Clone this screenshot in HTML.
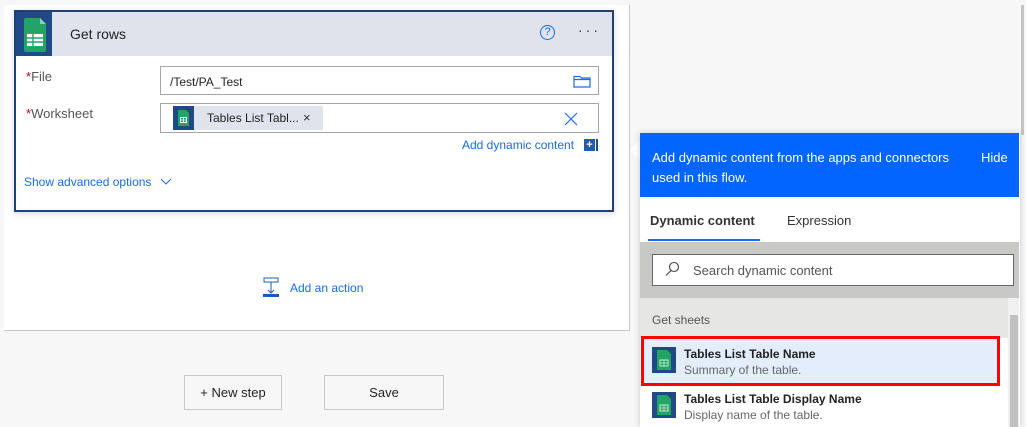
<!DOCTYPE html>
<html><head><style>
*{box-sizing:border-box;margin:0;padding:0}
body{width:1026px;height:427px;overflow:hidden;background:#f7f7f7;font-family:"Liberation Sans",sans-serif;position:relative;font-size:13px;color:#222}
.abs{position:absolute}
</style></head><body>
<div class="abs" style="left:4px;top:5px;width:626px;height:326px;background:#fff;border-right:1px solid #c8c8c8;border-bottom:1px solid #c8c8c8"></div>
<div class="abs" style="left:1021px;top:5px;width:3px;height:130px;background:#c4c4c4"></div>
<div class="abs" style="left:14px;top:10px;width:600px;height:202px;border:2px solid #223f7a;background:#fff;box-shadow:0 2px 6px rgba(0,0,0,.15)">
  <div class="abs" style="left:0;top:0;width:596px;height:44px;background:#dfe4ec"></div>
  <div class="abs" style="left:0;top:0;width:36px;height:44px;background:#1f4a87"></div>
  <svg class="abs" style="left:6px;top:4px" width="26" height="38" viewBox="0 0 26 38"><path d="M2 2h16l6 6v26a2 2 0 0 1-2 2H4a2 2 0 0 1-2-2V4a2 2 0 0 1 2-2z" fill="#21a464"/><path d="M18 2l6 6h-6z" fill="#8ed1b1"/><rect x="5" y="18" width="16" height="12" fill="#fff"/><path d="M5 22h16M5 26h16M11 18v12" stroke="#21a464" stroke-width="1.4"/></svg>
  <div class="abs" style="left:54px;top:14px;font-size:14px;color:#222">Get rows</div>
  <div class="abs" style="left:524px;top:13px;width:15px;height:15px;border:1.3px solid #1a6bf0;border-radius:50%;color:#1a6bf0;font-size:11px;text-align:center;line-height:13px">?</div>
  <div class="abs" style="left:562px;top:10px;font-size:14px;letter-spacing:3px;color:#333">···</div>
  <div class="abs" style="left:10px;top:57px;color:#555"><span style="color:#c00">*</span>File</div>
  <div class="abs" style="left:10px;top:94px;color:#555"><span style="color:#c00">*</span>Worksheet</div>
  <div class="abs" style="left:144px;top:54px;width:439px;height:29px;border:1px solid #a6a6a6;padding:8px 9px;font-size:12px">/Test/PA_Test</div>
  <svg class="abs" style="left:557px;top:62px" width="18" height="14" viewBox="0 0 18 14"><path d="M1 2.5h6l1.5 1.5H17V13H1z M1 5.5h16" fill="none" stroke="#1a6bf0" stroke-width="1.2"/></svg>
  <div class="abs" style="left:144px;top:91px;width:439px;height:30px;border:1px solid #a6a6a6"></div>
  <div class="abs" style="left:157px;top:94px;width:150px;height:24px;background:#dfe4ec"></div>
  <div class="abs" style="left:157px;top:94px;width:21px;height:24px;background:#1f4a87"></div>
  <svg class="abs" style="left:161px;top:97px" width="13" height="18" viewBox="0 0 13 18"><path d="M1 1h8l3 3v13H1z" fill="#21a464"/><rect x="3.5" y="8.5" width="6" height="5" fill="none" stroke="#fff" stroke-width="1"/><path d="M3.5 11h6M6.5 8.5v5" stroke="#fff" stroke-width=".8"/></svg>
  <div class="abs" style="left:191px;top:99px;font-size:12px">Tables List Tabl...</div>
  <div class="abs" style="left:287px;top:98px;font-size:13px;color:#333">×</div>
  <svg class="abs" style="left:548px;top:100px" width="14" height="14"><path d="M1 1l12 12M13 1L1 13" stroke="#1a6bf0" stroke-width="1.2"/></svg>
  <div class="abs" style="left:446px;top:126px;font-size:12px;color:#1a6bf0">Add dynamic content</div>
  <div class="abs" style="left:568px;top:127px;width:11px;height:12px;background:#1f5cb0;color:#fff;font-size:11px;line-height:12px;text-align:center;font-weight:bold">+</div>
  <div class="abs" style="left:580px;top:127px;width:2px;height:12px;background:#1f4a87"></div>
  <div class="abs" style="left:8px;top:163px;font-size:12px;color:#1a6bf0">Show advanced options</div>
  <svg class="abs" style="left:144px;top:166px" width="12" height="8"><path d="M1 1l5 5 5-5" fill="none" stroke="#1a6bf0"/></svg>
</div>
<svg class="abs" style="left:263px;top:277px" width="20" height="21"><rect x="1" y="1" width="14" height="4" fill="none" stroke="#1f5cb0"/><path d="M8 5v11M5 13l3 3 3-3" fill="none" stroke="#1f5cb0"/><rect x="0" y="17" width="16" height="3" fill="#1f5cb0"/></svg>
<div class="abs" style="left:290px;top:281px;font-size:12px;color:#1a6bf0">Add an action</div>
<div class="abs" style="left:184px;top:375px;width:98px;height:35px;border:1px solid #c8c8c8;background:#f7f7f7;text-align:center;line-height:33px;font-size:13px">+ New step</div>
<div class="abs" style="left:324px;top:375px;width:120px;height:35px;border:1px solid #c8c8c8;background:#f7f7f7;text-align:center;line-height:33px;font-size:13px">Save</div>
<div class="abs" style="left:630px;top:140px;width:0;height:0;border-top:10px solid transparent;border-bottom:10px solid transparent;border-right:10px solid #fff"></div>
<div class="abs" style="left:640px;top:133px;width:380px;height:294px;background:#fff;box-shadow:0 0 6px rgba(0,0,0,.2)">
  <div class="abs" style="left:0;top:0;width:379px;height:64px;background:#0066ff;color:#fff;font-size:13px">
    <div class="abs" style="left:12px;top:15px;line-height:20px;width:320px">Add dynamic content from the apps and connectors used in this flow.</div>
    <div class="abs" style="left:341px;top:17px">Hide</div>
  </div>
  <div class="abs" style="left:10px;top:80px;font-size:13px;font-weight:bold;color:#333">Dynamic content</div>
  <div class="abs" style="left:147px;top:80px;font-size:13px;color:#333">Expression</div>
  <div class="abs" style="left:8px;top:106px;width:112px;height:2px;background:#1a6bf0"></div>
  <div class="abs" style="left:0;top:109px;width:379px;height:56px;background:#c8c9c6"></div>
  <div class="abs" style="left:12px;top:121px;width:362px;height:32px;background:#fff;border:1px solid #666"></div>
  <svg class="abs" style="left:24px;top:128px" width="16" height="16"><circle cx="10" cy="6" r="4.5" fill="none" stroke="#444" stroke-width="1.1"/><path d="M7 9.5L2 14.5" stroke="#444" stroke-width="1.1"/></svg>
  <div class="abs" style="left:53px;top:130px;font-size:13px;color:#555">Search dynamic content</div>
  <div class="abs" style="left:0;top:165px;width:368px;height:40px;background:#e6e7e4"></div>
  <div class="abs" style="left:12px;top:180px;font-size:12px;color:#555">Get sheets</div>
  <div class="abs" style="left:368px;top:165px;width:11px;height:129px;background:#f0f0f0"></div>
  <div class="abs" style="left:370px;top:182px;width:8px;height:112px;background:#c1c1c1"></div>
  <div class="abs" style="left:1px;top:203px;width:359px;height:50px;background:#e3edfb;border:3px solid #f00"></div>
  <div class="abs" style="left:12px;top:214px;width:24px;height:26px;background:#1f4a87"></div>
  <svg class="abs" style="left:16px;top:216px" width="16" height="22" viewBox="0 0 16 22"><path d="M1 1h10l4 4v16H1z" fill="#21a464"/><rect x="4" y="11" width="8" height="6" fill="none" stroke="#c9ecd9" stroke-width="1"/><path d="M4 14h8M8 11v6" stroke="#c9ecd9" stroke-width=".8"/></svg>
  <div class="abs" style="left:44px;top:214px;font-size:12px;font-weight:bold;color:#222">Tables List Table Name</div>
  <div class="abs" style="left:44px;top:230px;font-size:12px;color:#666">Summary of the table.</div>
  <div class="abs" style="left:12px;top:259px;width:24px;height:26px;background:#1f4a87"></div>
  <svg class="abs" style="left:16px;top:261px" width="16" height="22" viewBox="0 0 16 22"><path d="M1 1h10l4 4v16H1z" fill="#21a464"/><rect x="4" y="11" width="8" height="6" fill="none" stroke="#c9ecd9" stroke-width="1"/><path d="M4 14h8M8 11v6" stroke="#c9ecd9" stroke-width=".8"/></svg>
  <div class="abs" style="left:44px;top:259px;font-size:12px;font-weight:bold;color:#222">Tables List Table Display Name</div>
  <div class="abs" style="left:44px;top:275px;font-size:12px;color:#666">Display name of the table.</div>
</div>
</body></html>
